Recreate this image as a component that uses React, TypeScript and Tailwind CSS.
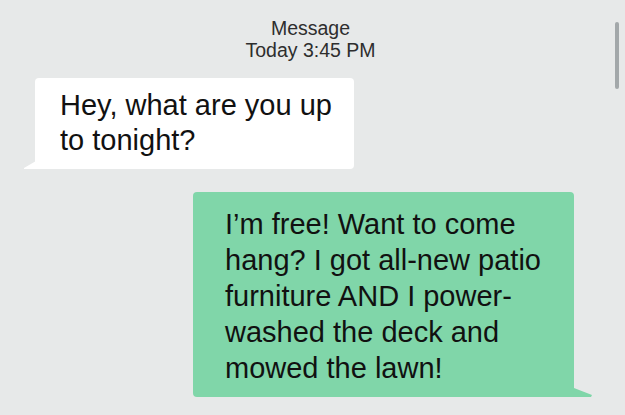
import React from 'react';

const App: React.FC = () => {
  return (
    <div className="relative w-[625px] h-[415px] overflow-hidden bg-[#e7e9e9] font-['Liberation_Sans',Arial,sans-serif]">
      {/* header */}
      <div className="pt-[17px] pr-[4px] text-center text-[19.5px] leading-[22px] text-[#2e2e2e]">
        <p>Message</p>
        <p>Today 3:45 PM</p>
      </div>

      {/* incoming */}
      <div className="relative ml-[35px] mt-[17px] w-[319px] rounded-[4px] rounded-bl-none bg-white pl-[25px] pr-[4px] pt-[10px] pb-[11px]">
        <p className="text-[29px] leading-[35px] text-[#111]">Hey, what are you up to tonight?</p>
        <svg className="absolute left-[-11px] bottom-0" width="12" height="8" viewBox="0 0 12 8">
          <polygon points="0,7 12,0 12,8 0,8" fill="#ffffff" />
        </svg>
      </div>

      {/* outgoing */}
      <div className="relative ml-[193px] mt-[23px] w-[381px] rounded-[4px] rounded-br-none bg-[#80d6a9] pl-[32px] pr-[4px] pt-[14px] pb-[11px]">
        <p className="text-[29px] leading-[36px] text-[#111]">
          I’m free! Want to come hang? I got all-new patio furniture AND I power-washed the deck and mowed the lawn!
        </p>
        <svg className="absolute right-[-19px] bottom-0" width="20" height="9" viewBox="0 0 20 9">
          <polygon points="0,0 1,0 19,7 18,9 0,9" fill="#80d6a9" />
        </svg>
      </div>

      {/* scrollbar */}
      <div className="absolute right-[6px] top-[22px] h-[67px] w-[4px] rounded-full bg-[#a3a8aa]" />
    </div>
  );
};

export default App;
